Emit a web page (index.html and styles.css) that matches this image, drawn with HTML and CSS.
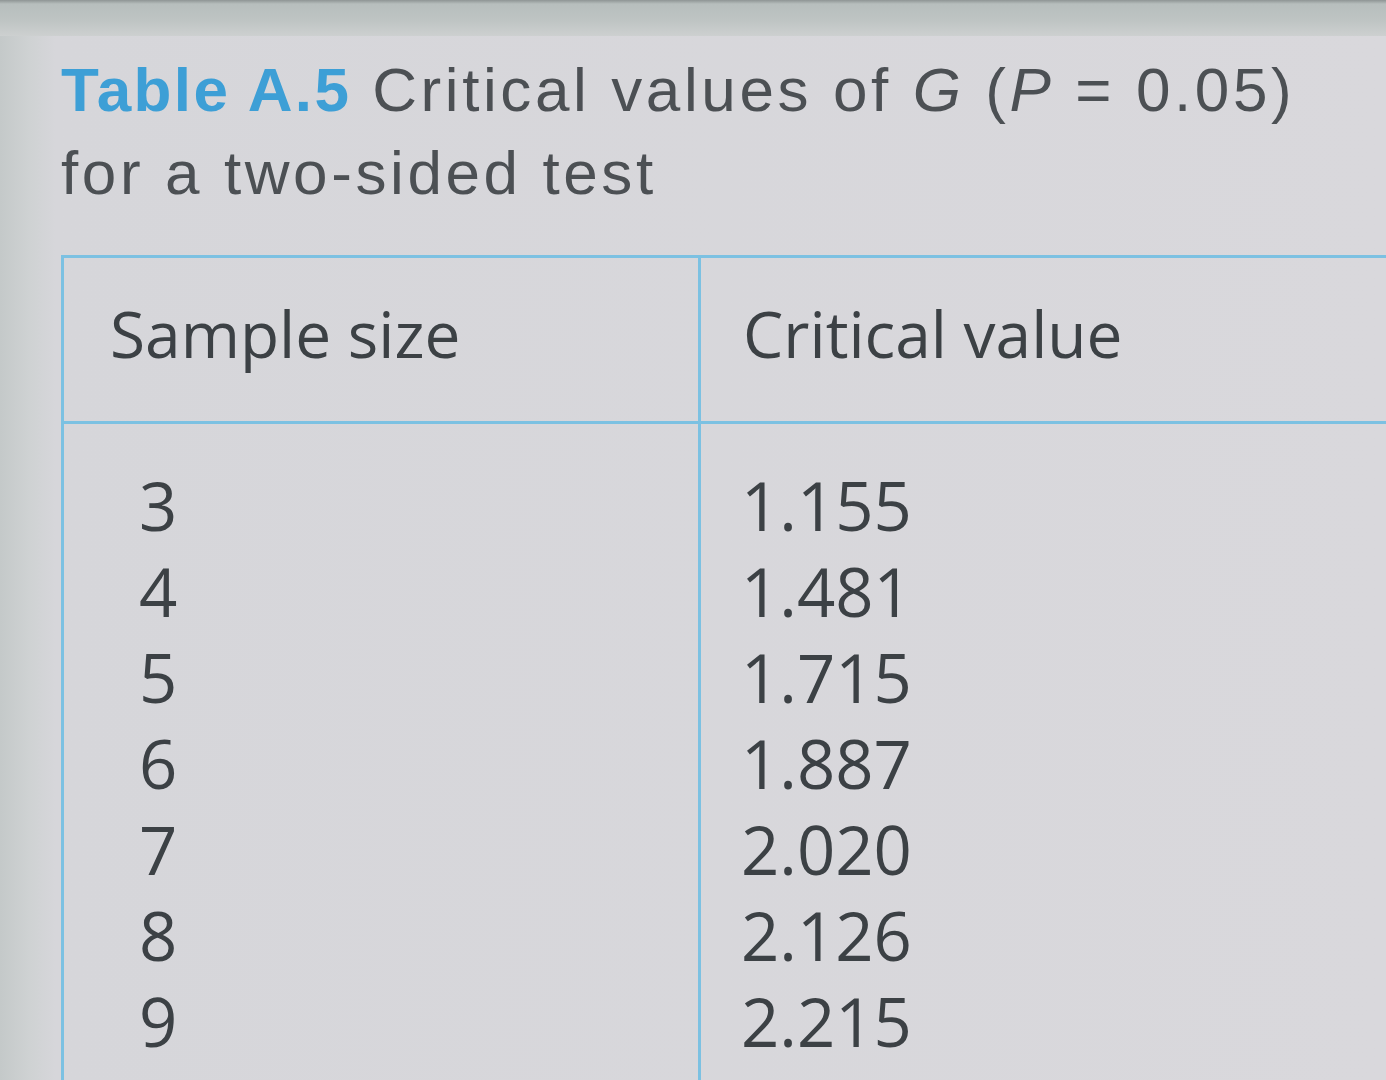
FILE: index.html
```html
<!DOCTYPE html>
<html>
<head>
<meta charset="utf-8">
<link rel="stylesheet" href="styles.css">
</head>
<body>
<div class="topband"></div>
<div class="page">
  <h1 class="title"><span class="label">Table A.5</span> Critical values of <i>G</i> (<i>P</i> = 0.05)<br>for a two-sided test</h1>
  <table class="gtable">
    <thead>
      <tr><th class="c1">Sample size</th><th class="c2">Critical value</th></tr>
    </thead>
    <tbody>
      <tr>
        <td class="c1 n">3<br>4<br>5<br>6<br>7<br>8<br>9</td>
        <td class="c2">1.155<br>1.481<br>1.715<br>1.887<br>2.020<br>2.126<br>2.215</td>
      </tr>
    </tbody>
  </table>
</div>
</body>
</html>
```
FILE: styles.css
```css
html, body {
  margin: 0;
  padding: 0;
  height: 1080px;
  overflow: hidden;
}
body {
  background: linear-gradient(to right, #c4c9c9 0, #cfd2d3 30px, #d6d6da 55px, #d9d8dc 100%);
  color: #44484c;
}
.topband {
  height: 36px;
  background: linear-gradient(to bottom, #8e9494 0, #b7bebd 4px, #bec4c3 20px, #cdd0d0 36px);
}
.page {
  padding-left: 61px;
}
.title {
  margin: 12px 0 0 0;
  font-family: "Liberation Sans", Arial, sans-serif;
  font-weight: normal;
  font-size: 62px;
  line-height: 83px;
  color: #4c5054;
  letter-spacing: 3.6px;
  white-space: nowrap;
}
.title .label {
  color: #3d9fd6;
  font-weight: bold;
  letter-spacing: 2.4px;
}
.gtable {
  margin-top: 41px;
  border-collapse: collapse;
  width: 1400px;
  font-family: "Open Sans", "Noto Sans", sans-serif;
  color: #3c4145;
}
.gtable th, .gtable td {
  border: 3px solid #7cc1e2;
  text-align: left;
  vertical-align: top;
  font-weight: normal;
}
.gtable th {
  font-size: 64px;
  line-height: 80px;
  padding: 36px 0 47px 0;
}
.gtable th.c1 { padding-left: 46px; width: 588px; }
.gtable th.c2 { padding-left: 42px; }
.gtable td {
  font-size: 67px;
  line-height: 86px;
  padding-top: 38px;
  padding-bottom: 40px;
  border-bottom: none;
}
.gtable td.c1 { padding-left: 75px; }
.gtable td.c2 { padding-left: 40px; }
```
